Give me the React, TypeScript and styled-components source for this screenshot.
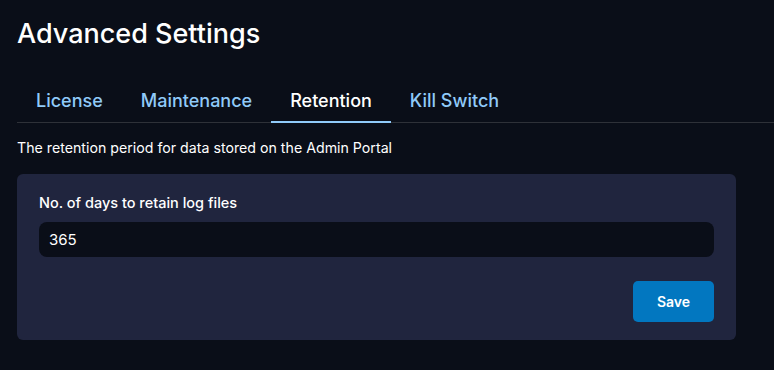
import React, { useState } from "react";
import styled, { createGlobalStyle } from "styled-components";

const GlobalStyle = createGlobalStyle`
  html, body {
    margin: 0;
    padding: 0;
    background: #0a0e18;
    font-family: Inter, "Liberation Sans", sans-serif;
    color: #ffffff;
  }
`;

const Page = styled.div`
  min-height: 370px;
  padding: 18px 0 0 17px;
  box-sizing: border-box;
`;

const Title = styled.h1`
  margin: 0;
  font-size: 27px;
  font-weight: 500;
  line-height: 32px;
  letter-spacing: 0;
`;

const TabBar = styled.div`
  display: flex;
  margin-top: 28px;
  border-bottom: 1px solid #2e3138;
`;

const Tab = styled.button<{ $active?: boolean }>`
  position: relative;
  background: none;
  border: 0;
  padding: 0 19px;
  height: 44px;
  font-family: inherit;
  font-size: 18px;
  font-weight: 500;
  color: ${(p) => (p.$active ? "#ffffff" : "#90caf9")};
  cursor: pointer;

  &::after {
    content: "";
    position: absolute;
    left: 0;
    right: 0;
    bottom: -1px;
    height: 2px;
    background: ${(p) => (p.$active ? "#90caf9" : "transparent")};
  }
`;

const Description = styled.p`
  margin: 15px 0 0;
  font-size: 14.2px;
  line-height: 20px;
`;

const Card = styled.div`
  margin-top: 16px;
  width: 719px;
  background: #20253e;
  border-radius: 6px;
  padding: 20px 22px 18px;
  box-sizing: border-box;
  display: flex;
  flex-direction: column;
`;

const Label = styled.label`
  font-size: 14.5px;
  font-weight: 500;
  line-height: 18px;
`;

const Input = styled.input`
  margin-top: 10px;
  height: 35px;
  box-sizing: border-box;
  background: #0a0e18;
  border: 0;
  border-radius: 8px;
  padding: 0 10px;
  color: #ffffff;
  font-family: inherit;
  font-size: 15px;
  outline: none;
`;

const Actions = styled.div`
  display: flex;
  justify-content: flex-end;
  margin-top: 24px;
`;

const SaveButton = styled.button`
  width: 81px;
  height: 41px;
  background: #0277c0;
  border: 0;
  border-radius: 5px;
  color: #ffffff;
  font-family: inherit;
  font-size: 14px;
  font-weight: 600;
  cursor: pointer;
`;

const tabs = ["License", "Maintenance", "Retention", "Kill Switch"];

export default function App() {
  const [active, setActive] = useState("Retention");
  const [days, setDays] = useState("365");
  return (
    <>
      <GlobalStyle />
      <Page>
        <Title>Advanced Settings</Title>
        <TabBar>
          {tabs.map((t) => (
            <Tab key={t} $active={t === active} onClick={() => setActive(t)}>
              {t}
            </Tab>
          ))}
        </TabBar>
        <Description>The retention period for data stored on the Admin Portal</Description>
        <Card>
          <Label htmlFor="retain-days">No. of days to retain log files</Label>
          <Input id="retain-days" value={days} onChange={(e) => setDays(e.target.value)} />
          <Actions>
            <SaveButton>Save</SaveButton>
          </Actions>
        </Card>
      </Page>
    </>
  );
}
